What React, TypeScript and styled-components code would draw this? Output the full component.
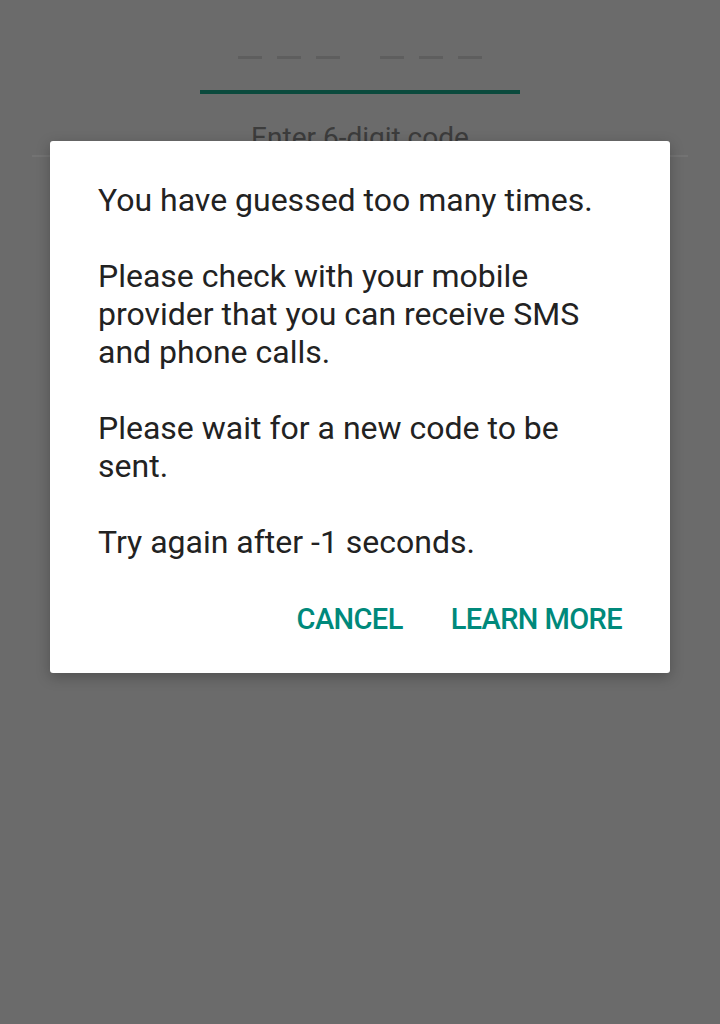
import React from "react";
import styled, { createGlobalStyle } from "styled-components";

const Global = createGlobalStyle`
  html, body { margin: 0; padding: 0; background: #6b6b6b; }
  body { font-family: Roboto, "Noto Sans", sans-serif; }
`;

const Screen = styled.div`
  position: relative;
  width: 720px;
  height: 1024px;
  background: #6b6b6b;
  overflow: hidden;
`;

const Backdrop = styled.div`
  display: flex;
  flex-direction: column;
  align-items: center;
  padding-top: 56px;
`;

const DashRow = styled.div`
  display: flex;
  gap: 40px;
`;

const DashGroup = styled.div`
  display: flex;
  gap: 15px;
`;

const Dash = styled.div`
  width: 24px;
  height: 3px;
  background: #5e5e5e;
`;

const Underline = styled.div`
  width: 320px;
  height: 4px;
  margin-top: 31px;
  background: #0b4a3d;
`;

const Hint = styled.div`
  margin-top: 28px;
  font-size: 28px;
  line-height: 32px;
  color: #3c3c3c;
`;

const Divider = styled.div`
  align-self: stretch;
  margin: 1px 32px 0;
  height: 2px;
  background: #737373;
`;

const Dialog = styled.div`
  position: absolute;
  left: 50px;
  top: 141px;
  width: 620px;
  height: 532px;
  box-sizing: border-box;
  background: #ffffff;
  border-radius: 3px;
  box-shadow: 0 4px 14px rgba(0, 0, 0, 0.25);
  padding: 40px 48px 0 48px;
  display: flex;
  flex-direction: column;
`;

const Message = styled.div`
  font-size: 32px;
  line-height: 38px;
  color: #222222;
  display: flex;
  flex-direction: column;
  gap: 38px;
`;

const Para = styled.p`
  margin: 0;
`;

const Actions = styled.div`
  display: flex;
  justify-content: flex-end;
  gap: 48px;
  margin-top: 40px;
`;

const ActionButton = styled.button`
  border: none;
  background: none;
  padding: 0;
  font-family: Roboto, "Noto Sans", sans-serif;
  font-weight: 500;
  font-size: 29px;
  line-height: 36px;
  letter-spacing: -0.6px;
  color: #00897b;
  text-transform: uppercase;
`;

export default function App() {
  return (
    <Screen>
      <Global />
      <Backdrop>
        <DashRow>
          <DashGroup>
            <Dash />
            <Dash />
            <Dash />
          </DashGroup>
          <DashGroup>
            <Dash />
            <Dash />
            <Dash />
          </DashGroup>
        </DashRow>
        <Underline />
        <Hint>Enter 6-digit code</Hint>
        <Divider />
      </Backdrop>
      <Dialog>
        <Message>
          <Para>You have guessed too many times.</Para>
          <Para>
            Please check with your mobile provider that you can receive SMS
            and phone calls.
          </Para>
          <Para>Please wait for a new code to be sent.</Para>
          <Para>Try again after -1 seconds.</Para>
        </Message>
        <Actions>
          <ActionButton>Cancel</ActionButton>
          <ActionButton>Learn more</ActionButton>
        </Actions>
      </Dialog>
    </Screen>
  );
}
